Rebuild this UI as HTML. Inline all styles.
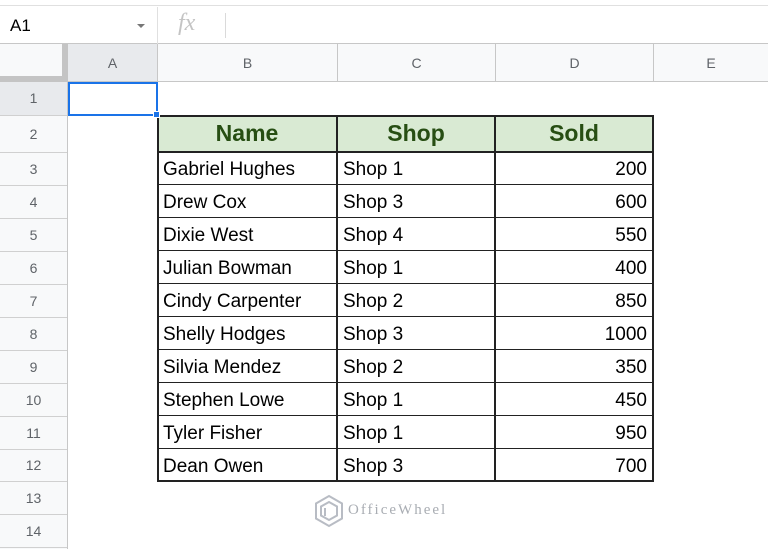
<!DOCTYPE html><html><head><style>
body{margin:0;width:768px;height:549px;overflow:hidden;background:#fff;font-family:"Liberation Sans",Arial,sans-serif;position:relative}
div{position:absolute;box-sizing:border-box}
.h{background:#f8f9fa;color:#5f6368;font-size:14px;text-align:center}
.rh{background:#f8f9fa;color:#5f6368;font-size:14px;text-align:center;border-bottom:1px solid #d0d0d0}
.t{font-size:19px;color:#000;white-space:nowrap}
</style></head><body>
<div style="left:0;top:0;width:768px;height:6px;background:#fff;border-bottom:1px solid #e0e0e0"></div>
<div style="left:0;top:7px;width:768px;height:37px;background:#fff;border-bottom:1px solid #c7c7c7"></div>
<div style="left:10px;top:16px;font-size:17px;color:#000">A1</div>
<div style="left:137px;top:24px;width:0;height:0;border-left:4px solid transparent;border-right:4px solid transparent;border-top:4px solid #777"></div>
<div style="left:157px;top:7px;width:1px;height:37px;background:#e0e0e0"></div>
<div style="left:178px;top:10px;font-family:'Liberation Serif',serif;font-style:italic;font-size:24px;color:#c4c4c4">fx</div>
<div style="left:225px;top:13px;width:1px;height:25px;background:#dadada"></div>
<!-- column header -->
<div class="h" style="left:0;top:44px;width:768px;height:38px;border-bottom:1px solid #c7c7c7"></div>
<div style="left:0;top:44px;width:62px;height:33px;background:#f8f9fa"></div>
<div style="left:62px;top:44px;width:6px;height:38px;background:#c4c4c4"></div>
<div style="left:0;top:76px;width:68px;height:6px;background:#c4c4c4"></div>
<div class="h" style="left:68px;top:44px;width:89px;height:37px;background:#e8eaed;line-height:39px">A</div>
<div class="h" style="left:157px;top:44px;width:180px;height:37px;line-height:39px;border-left:1px solid #c7c7c7">B</div>
<div class="h" style="left:337px;top:44px;width:158px;height:37px;line-height:39px;border-left:1px solid #c7c7c7">C</div>
<div class="h" style="left:495px;top:44px;width:158px;height:37px;line-height:39px;border-left:1px solid #c7c7c7">D</div>
<div class="h" style="left:653px;top:44px;width:115px;height:37px;line-height:39px;border-left:1px solid #c7c7c7">E</div>
<!-- row headers -->
<div style="left:0;top:82px;width:68px;height:467px;background:#f8f9fa;border-right:1px solid #c7c7c7"></div>
<div class="rh" style="left:0;top:82px;width:67px;height:34px;line-height:32px;background:#e8eaed">1</div>
<div class="rh" style="left:0;top:116px;width:67px;height:37px;line-height:36px">2</div>
<div class="rh" style="left:0;top:153px;width:67px;height:33px;line-height:32px">3</div>
<div class="rh" style="left:0;top:186px;width:67px;height:33px;line-height:32px">4</div>
<div class="rh" style="left:0;top:219px;width:67px;height:33px;line-height:32px">5</div>
<div class="rh" style="left:0;top:252px;width:67px;height:33px;line-height:32px">6</div>
<div class="rh" style="left:0;top:285px;width:67px;height:33px;line-height:32px">7</div>
<div class="rh" style="left:0;top:318px;width:67px;height:33px;line-height:32px">8</div>
<div class="rh" style="left:0;top:351px;width:67px;height:33px;line-height:32px">9</div>
<div class="rh" style="left:0;top:384px;width:67px;height:33px;line-height:32px">10</div>
<div class="rh" style="left:0;top:417px;width:67px;height:33px;line-height:32px">11</div>
<div class="rh" style="left:0;top:450px;width:67px;height:32px;line-height:31px">12</div>
<div class="rh" style="left:0;top:482px;width:67px;height:33px;line-height:32px">13</div>
<div class="rh" style="left:0;top:515px;width:67px;height:33px;line-height:32px">14</div>
<!-- table -->
<div style="left:157px;top:115px;width:497px;height:367px;border:2px solid #222"></div>
<div style="left:159px;top:117px;width:493px;height:35px;background:#d9ead3"></div>
<div style="left:157px;top:151px;width:497px;height:2px;background:#222"></div>
<div style="left:336px;top:115px;width:2px;height:367px;background:#222"></div>
<div style="left:494px;top:115px;width:2px;height:367px;background:#222"></div>
<div style="left:157px;top:184px;width:497px;height:1px;background:#222"></div>
<div style="left:157px;top:217px;width:497px;height:1px;background:#222"></div>
<div style="left:157px;top:250px;width:497px;height:1px;background:#222"></div>
<div style="left:157px;top:283px;width:497px;height:1px;background:#222"></div>
<div style="left:157px;top:316px;width:497px;height:1px;background:#222"></div>
<div style="left:157px;top:349px;width:497px;height:1px;background:#222"></div>
<div style="left:157px;top:382px;width:497px;height:1px;background:#222"></div>
<div style="left:157px;top:415px;width:497px;height:1px;background:#222"></div>
<div style="left:157px;top:448px;width:497px;height:1px;background:#222"></div>
<div style="left:157px;top:120px;width:180px;text-align:center;font-weight:bold;font-size:23px;color:#274e13">Name</div>
<div style="left:337px;top:120px;width:158px;text-align:center;font-weight:bold;font-size:23px;color:#274e13">Shop</div>
<div style="left:495px;top:120px;width:158px;text-align:center;font-weight:bold;font-size:23px;color:#274e13">Sold</div>
<div class="t" style="left:163px;top:159px">Gabriel Hughes</div><div class="t" style="left:343px;top:159px">Shop 1</div><div class="t" style="left:495px;top:159px;width:152px;text-align:right">200</div>
<div class="t" style="left:163px;top:192px">Drew Cox</div><div class="t" style="left:343px;top:192px">Shop 3</div><div class="t" style="left:495px;top:192px;width:152px;text-align:right">600</div>
<div class="t" style="left:163px;top:225px">Dixie West</div><div class="t" style="left:343px;top:225px">Shop 4</div><div class="t" style="left:495px;top:225px;width:152px;text-align:right">550</div>
<div class="t" style="left:163px;top:258px">Julian Bowman</div><div class="t" style="left:343px;top:258px">Shop 1</div><div class="t" style="left:495px;top:258px;width:152px;text-align:right">400</div>
<div class="t" style="left:163px;top:291px">Cindy Carpenter</div><div class="t" style="left:343px;top:291px">Shop 2</div><div class="t" style="left:495px;top:291px;width:152px;text-align:right">850</div>
<div class="t" style="left:163px;top:324px">Shelly Hodges</div><div class="t" style="left:343px;top:324px">Shop 3</div><div class="t" style="left:495px;top:324px;width:152px;text-align:right">1000</div>
<div class="t" style="left:163px;top:357px">Silvia Mendez</div><div class="t" style="left:343px;top:357px">Shop 2</div><div class="t" style="left:495px;top:357px;width:152px;text-align:right">350</div>
<div class="t" style="left:163px;top:390px">Stephen Lowe</div><div class="t" style="left:343px;top:390px">Shop 1</div><div class="t" style="left:495px;top:390px;width:152px;text-align:right">450</div>
<div class="t" style="left:163px;top:423px">Tyler Fisher</div><div class="t" style="left:343px;top:423px">Shop 1</div><div class="t" style="left:495px;top:423px;width:152px;text-align:right">950</div>
<div class="t" style="left:163px;top:456px">Dean Owen</div><div class="t" style="left:343px;top:456px">Shop 3</div><div class="t" style="left:495px;top:456px;width:152px;text-align:right">700</div>
<!-- selection -->
<div style="left:68px;top:82px;width:90px;height:34px;border:2px solid #1a73e8"></div>
<div style="left:153px;top:111px;width:7px;height:7px;background:#1a73e8;border:1px solid #fff"></div>
<!-- watermark -->
<svg style="position:absolute;left:313px;top:494px" width="32" height="34" viewBox="0 0 32 34"><g fill="none" stroke="#b8bcc4" stroke-width="2"><path d="M16 2L29 9.5V24.5L16 32L3 24.5V9.5Z"/><path d="M16 8L24 12.5V21.5L16 26L8 21.5V12.5Z"/><path d="M12 14V22"/></g></svg>
<div style="left:348px;top:502px;font-family:'Liberation Serif',serif;font-size:15px;letter-spacing:2px;color:#a9adb3">OfficeWheel</div>
</body></html>
